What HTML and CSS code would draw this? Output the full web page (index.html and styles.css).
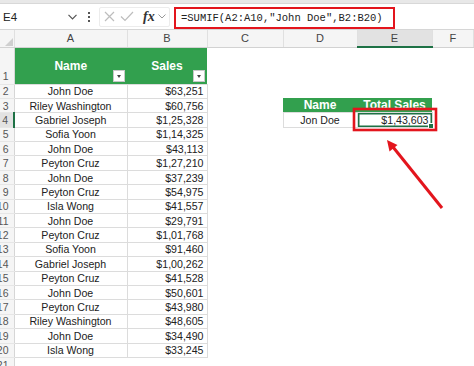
FILE: index.html
```html
<!DOCTYPE html>
<html lang="en">
<head>
  <meta charset="UTF-8">
  <title>SUMIF</title>
  <link rel="stylesheet" href="styles.css">
</head>
<body>
  <div class="ribbon-edge"></div>

  <div class="formula-bar">
    <div class="name-box">
      <span>E4</span>
      <svg width="9" height="6" viewBox="0 0 9 6"><polyline points="0.5,0.8 4.5,4.8 8.5,0.8" fill="none" stroke="#555" stroke-width="1.2"/></svg>
    </div>
    <span class="dots"><i></i><i></i><i></i></span>
    <div class="fx-tools">
      <svg width="11" height="11" viewBox="0 0 11 11"><path d="M1 1 L10 10 M10 1 L1 10" stroke="#bdbdbd" stroke-width="1.2"/></svg>
      <svg width="14" height="11" viewBox="0 0 14 11"><polyline points="1,5.5 5,9.5 13,1" fill="none" stroke="#bdbdbd" stroke-width="1.2"/></svg>
      <span class="fx">fx</span>
      <svg width="8" height="5" viewBox="0 0 8 5"><polyline points="0.5,0.5 4,4 7.5,0.5" fill="none" stroke="#999" stroke-width="1"/></svg>
    </div>
    <div class="formula">=SUMIF(A2:A10,"John Doe",B2:B20)</div>
  </div>

  <table class="sheet">
    <colgroup>
      <col class="w-rh"><col class="w-a"><col class="w-b"><col class="w-c"><col class="w-d"><col class="w-e"><col>
    </colgroup>
    <tr class="col-heads">
      <th class="corner"><svg width="8" height="8" viewBox="0 0 8 8"><polygon points="8,0 8,8 0,8" fill="#cfcfcf"/></svg></th>
      <th>A</th><th>B</th><th>C</th><th>D</th><th class="active">E</th><th>F</th>
    </tr>
    <tr class="tall">
      <td class="rh bottom">1</td>
      <td class="hd">Name<span class="filter"></span></td>
      <td class="hd">Sales<span class="filter"></span></td>
      <td></td><td></td><td></td><td></td>
    </tr>
    <tr><td class="rh">2</td><td class="c name">John Doe</td><td class="c num">$63,251</td><td></td><td></td><td></td><td></td></tr>
    <tr><td class="rh">3</td><td class="c name">Riley Washington</td><td class="c num">$60,756</td><td></td><td class="hd small">Name</td><td class="hd small">Total Sales</td><td></td></tr>
    <tr><td class="rh active">4</td><td class="c name">Gabriel Joseph</td><td class="c num">$1,25,328</td><td></td><td class="c name">Jon Doe</td><td class="c num sel">$1,43,603<span class="handle"></span></td><td></td></tr>
    <tr><td class="rh">5</td><td class="c name">Sofia Yoon</td><td class="c num">$1,14,325</td><td></td><td></td><td></td><td></td></tr>
    <tr><td class="rh">6</td><td class="c name">John Doe</td><td class="c num">$43,113</td><td></td><td></td><td></td><td></td></tr>
    <tr><td class="rh">7</td><td class="c name">Peyton Cruz</td><td class="c num">$1,27,210</td><td></td><td></td><td></td><td></td></tr>
    <tr><td class="rh">8</td><td class="c name">John Doe</td><td class="c num">$37,239</td><td></td><td></td><td></td><td></td></tr>
    <tr><td class="rh">9</td><td class="c name">Peyton Cruz</td><td class="c num">$54,975</td><td></td><td></td><td></td><td></td></tr>
    <tr><td class="rh">10</td><td class="c name">Isla Wong</td><td class="c num">$41,557</td><td></td><td></td><td></td><td></td></tr>
    <tr><td class="rh">11</td><td class="c name">John Doe</td><td class="c num">$29,791</td><td></td><td></td><td></td><td></td></tr>
    <tr><td class="rh">12</td><td class="c name">Peyton Cruz</td><td class="c num">$1,01,768</td><td></td><td></td><td></td><td></td></tr>
    <tr><td class="rh">13</td><td class="c name">Sofia Yoon</td><td class="c num">$91,460</td><td></td><td></td><td></td><td></td></tr>
    <tr><td class="rh">14</td><td class="c name">Gabriel Joseph</td><td class="c num">$1,00,262</td><td></td><td></td><td></td><td></td></tr>
    <tr><td class="rh">15</td><td class="c name">Peyton Cruz</td><td class="c num">$41,528</td><td></td><td></td><td></td><td></td></tr>
    <tr><td class="rh">16</td><td class="c name">John Doe</td><td class="c num">$50,601</td><td></td><td></td><td></td><td></td></tr>
    <tr><td class="rh">17</td><td class="c name">Peyton Cruz</td><td class="c num">$43,980</td><td></td><td></td><td></td><td></td></tr>
    <tr><td class="rh">18</td><td class="c name">Riley Washington</td><td class="c num">$48,605</td><td></td><td></td><td></td><td></td></tr>
    <tr><td class="rh">19</td><td class="c name">John Doe</td><td class="c num">$34,490</td><td></td><td></td><td></td><td></td></tr>
    <tr><td class="rh">20</td><td class="c name">Isla Wong</td><td class="c num">$33,245</td><td></td><td></td><td></td><td></td></tr>
    <tr><td class="rh">21</td><td></td><td></td><td></td><td></td><td></td><td></td></tr>
  </table>

  <!-- annotation drawn on top of the sheet -->
  <svg class="markup" width="474" height="366" viewBox="0 0 474 366">
    <rect x="354" y="109" width="82" height="21" fill="none" stroke="#e3151d" stroke-width="2.6"/>
    <line x1="442" y1="208" x2="393" y2="147" stroke="#e3151d" stroke-width="3"/>
    <polygon points="387,140 397.5,145 389.5,151.5" fill="#e3151d"/>
  </svg>
</body>
</html>
```

FILE: styles.css
```css
body {
  margin: 0;
  width: 474px;
  height: 366px;
  overflow: hidden;
  position: relative;
  background: #fff;
  font-family: "Liberation Sans", Arial, sans-serif;
  color: #222;
}

.ribbon-edge {
  height: 3px;
  background: #e8e8e8;
  border-bottom: 1px solid #d8d8d8;
}

.formula-bar {
  display: flex;
  align-items: center;
  height: 25px;
  border-bottom: 1px solid #d6d6d6;
}

.name-box {
  width: 82px;
  box-sizing: border-box;
  padding: 0 5px 0 3px;
  display: flex;
  align-items: center;
  justify-content: space-between;
  font-size: 11.5px;
  color: #222;
}

.dots {
  display: flex;
  flex-direction: column;
  gap: 2px;
  margin-left: 6px;
  width: 3px;
}

.dots i {
  display: block;
  width: 2px;
  height: 2px;
  background: #555;
}

.fx-tools {
  margin-left: 8px;
  width: 71px;
  height: 20px;
  box-sizing: border-box;
  border: 1px solid #ececec;
  border-radius: 2px;
  display: flex;
  align-items: center;
  gap: 5px;
  padding-left: 4px;
}

.fx {
  font-family: "Liberation Serif", "Times New Roman", serif;
  font-style: italic;
  font-weight: bold;
  font-size: 14px;
  color: #333;
  margin-left: 4px;
  margin-right: -2px;
}

.formula {
  align-self: flex-end;
  margin-left: 4px;
  width: 221px;
  height: 22px;
  box-sizing: border-box;
  border: 2px solid #e3151d;
  padding-left: 5px;
  display: flex;
  align-items: center;
  font-family: "Liberation Mono", "DejaVu Sans Mono", monospace;
  font-size: 10.5px;
  color: #222;
}

.sheet {
  border-collapse: collapse;
  table-layout: fixed;
  width: 474px;
}

.w-rh { width: 14px; }
.w-a { width: 113px; }
.w-b { width: 80px; }
.w-c { width: 76px; }
.w-d { width: 74px; }
.w-e { width: 75px; }

.sheet tr { height: 14.4px; }
.sheet tr.tall { height: 37px; }

.sheet td {
  padding: 0 3px;
  white-space: nowrap;
  overflow: hidden;
  font-size: 10.6px;
  line-height: 12px;
}

.col-heads th {
  height: 16px;
  padding: 0;
  font-weight: normal;
  font-size: 11px;
  color: #444;
  background: #f5f5f5;
  border-right: 1px solid #e0e0e0;
  border-bottom: 1px solid #d2d2d2;
}

.col-heads th.active {
  background: #e2e2e2;
  border-bottom: 2px solid #1e7145;
}

.corner {
  text-align: right;
  vertical-align: bottom;
}

.corner svg {
  display: block;
  margin: 0 1px 1px auto;
}

.sheet td.rh {
  direction: rtl;
  text-align: right;
  padding: 0 5px 0 0;
  font-size: 10.5px;
  color: #555;
  background: #f5f5f5;
  border-right: 1px solid #d6d6d6;
  border-bottom: 1px solid #e6e6e6;
}

.sheet td.rh.bottom { vertical-align: bottom; padding-bottom: 2px; }

.sheet td.rh.active {
  background: #e2e2e2;
  border-right: 2px solid #1e7145;
}

.sheet td.hd {
  position: relative;
  background: #32a04e;
  color: #fff;
  font-weight: bold;
  font-size: 12px;
  text-align: center;
}

.sheet td.hd.small { line-height: 12px; }

.filter {
  position: absolute;
  right: 2px;
  bottom: 2px;
  width: 12px;
  height: 12px;
  box-sizing: border-box;
  background: #fff;
  border: 1px solid #c8c8c8;
}

.filter::after {
  content: "";
  position: absolute;
  left: 3px;
  top: 4px;
  border-left: 2.5px solid transparent;
  border-right: 2.5px solid transparent;
  border-top: 3px solid #444;
}

.sheet td.c {
  border: 1px solid #dcdcdc;
}

.name { text-align: center; }
.num { text-align: right; }

.sheet td.sel {
  position: relative;
  box-shadow: inset 0 0 0 1.5px #1e7145;
  overflow: visible;
}

.handle {
  position: absolute;
  right: -2px;
  bottom: -2px;
  width: 4px;
  height: 4px;
  background: #1e7145;
  border: 1px solid #fff;
}

.markup {
  position: absolute;
  top: 0;
  left: 0;
  pointer-events: none;
}
```
